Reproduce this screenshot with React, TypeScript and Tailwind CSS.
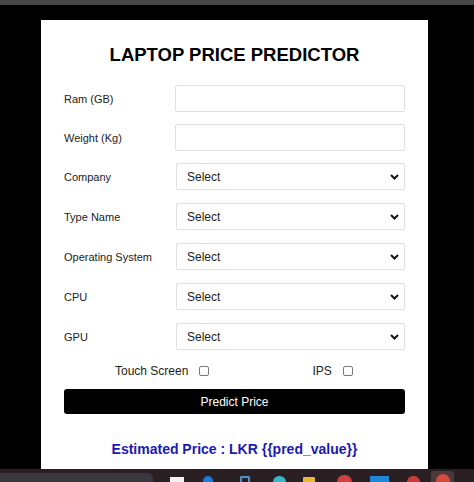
import React from "react";

const font = { fontFamily: '"Liberation Sans", Arial, sans-serif' };

function Chevron() {
  return (
    <svg width="9" height="6" viewBox="0 0 9 6" className="absolute right-[5px] top-1/2 -translate-y-1/2">
      <path d="M1 1 L4.5 4.5 L8 1" stroke="#111" strokeWidth="2" fill="none" />
    </svg>
  );
}

function InputRow({ label, mt }: { label: string; mt: string }) {
  return (
    <div className={`flex items-center ${mt}`}>
      <div className="w-[111px] pt-px text-[11px] text-[#222]">{label}</div>
      <div className="h-[27px] flex-1 rounded-[2px] border border-[#e0e0e0] bg-white" />
    </div>
  );
}

function SelectRow({ label, mt }: { label: string; mt: string }) {
  return (
    <div className={`flex items-center ${mt}`}>
      <div className="w-[112px] pt-px text-[11px] text-[#222]">{label}</div>
      <div className="relative h-[27px] flex-1 rounded-[2px] border border-[#e0e0e0] bg-white flex items-center pl-[10px] text-[12px] text-[#222]">
        Select
        <Chevron />
      </div>
    </div>
  );
}

function Box() {
  return <span className="inline-block h-[10px] w-[10px] rounded-[2px] border border-[#777] bg-white" />;
}

export default function App() {
  return (
    <div className="relative flex h-[482px] w-[474px] flex-col overflow-hidden bg-black" style={font}>
      <div className="h-[5px] bg-[#474747]" />
      <div className="flex-1 overflow-hidden pt-[15px]">
        <div className="ml-[41px] h-full w-[387px] bg-white px-[23px] pt-[24px]">
          <h3 className="text-center text-[18.5px] font-bold leading-[22px] text-black">LAPTOP PRICE PREDICTOR</h3>
          <div className="mt-[19px]">
            <InputRow label="Ram (GB)" mt="" />
            <InputRow label="Weight (Kg)" mt="mt-[12px]" />
            <SelectRow label="Company" mt="mt-[12px]" />
            <SelectRow label="Type Name" mt="mt-[13px]" />
            <SelectRow label="Operating System" mt="mt-[13px]" />
            <SelectRow label="CPU" mt="mt-[13px]" />
            <SelectRow label="GPU" mt="mt-[13px]" />
          </div>
          <div className="mt-[14px] flex h-[14px] items-center text-[12px] text-[#222]">
            <span className="ml-[51px]">Touch Screen</span>
            <span className="ml-[11px] flex"><Box /></span>
            <span className="ml-[103px]">IPS</span>
            <span className="ml-[11px] flex"><Box /></span>
          </div>
          <button className="mt-[11px] flex h-[25px] w-full items-center justify-center rounded-[3px] bg-black text-[12px] text-white">
            Predict Price
          </button>
          <div className="mt-[27px] text-center text-[14px] font-bold leading-[17px] text-[#1a1ab4]">
            Estimated Price : LKR {"{{pred_value}}"}
          </div>
        </div>
      </div>
      <div className="flex h-[13px] items-end bg-[#2a2024]">
        <div className="h-[9px] w-[153px] rounded-tr-[6px] bg-[#3a383e]" />
        <div className="ml-[17px] h-[5px] w-[14px] bg-[#f2f2f2]" />
        <div className="ml-[19px] h-[6px] w-[10px] rounded-t-full bg-[#1b79d8]" />
        <div className="ml-[27px] h-[6px] w-[10px] rounded-t-[2px] border-2 border-b-0 border-[#4a90d0]" />
        <div className="ml-[23px] h-[6px] w-[13px] rounded-t-full bg-[#3ab8c8]" />
        <div className="ml-[17px] h-[5px] w-[12px] rounded-t-[1px] bg-[#e8b830]" />
        <div className="ml-[22px] h-[7px] w-[15px] rounded-t-full bg-[#d04040]" />
        <div className="ml-[18px] h-[6px] w-[19px] bg-[#1e88d8]" />
        <div className="ml-[18px] h-[6px] w-[13px] rounded-t-full bg-[#c83c3c]" />
        <div className="ml-[11px] flex h-[11px] w-[23px] items-end justify-center rounded-t-[3px] bg-[#4a3a3e]">
          <div className="h-[8px] w-[14px] rounded-t-full bg-[#d44a3a]" />
        </div>
      </div>
    </div>
  );
}
